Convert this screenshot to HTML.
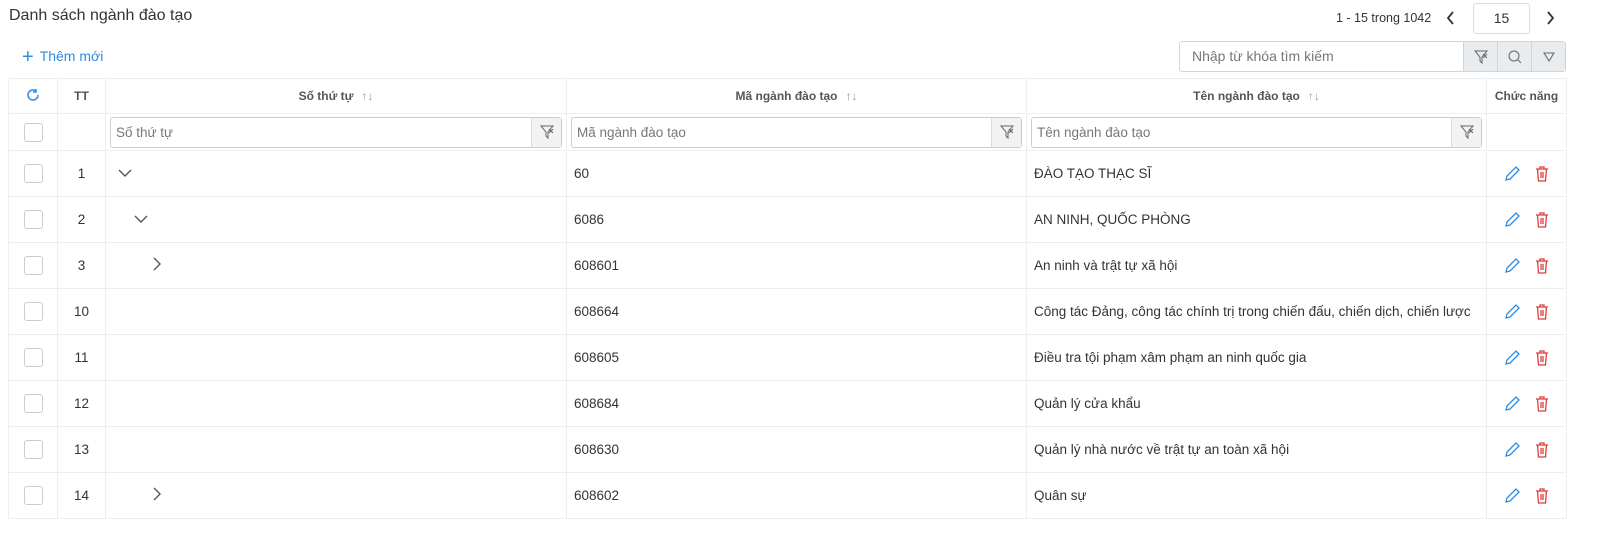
<!DOCTYPE html>
<html><head><meta charset="utf-8"><style>
*{box-sizing:border-box;margin:0;padding:0}
body{width:1616px;height:542px;background:#fff;font-family:"Liberation Sans",Arial,sans-serif;color:#333;position:relative;overflow:hidden}
.abs{position:absolute}
.title{left:9px;top:7px;font-size:16px;color:#333}
.pg{top:11px;left:1336px;font-size:12.5px;color:#333}
.pbox{left:1473px;top:3px;width:57px;height:31px;border:1px solid #ddd;border-radius:3px;text-align:center;line-height:29px;font-size:14px}
.add{left:22px;top:46px;font-size:14px;color:#2f8be6}
.search{left:1179px;top:41px;width:387px;height:31px;border:1px solid #d4d4d4;border-radius:3px;background:#fff;display:flex}
.search .in{flex:1;padding-left:12px;line-height:29px;font-size:14px;color:#777}
.search .b{width:34px;border-left:1px solid #d4d4d4;background:#e9ecef;display:flex;align-items:center;justify-content:center}
table{position:absolute;left:8px;top:78px;border-collapse:collapse;width:1558px;table-layout:fixed}
td,th{border:1px solid #eee;font-size:13.5px;white-space:nowrap;overflow:hidden}
th{height:35px;font-size:12px;color:#555;font-weight:bold}
.fr td{height:37px}
.dr td{height:46px}
.cb{width:19px;height:19px;border:1px solid #ccc;border-radius:3px;margin:auto}
.fi{margin:0 4px;height:31px;border:1px solid #ccc;border-radius:3px;display:flex}
.fi span{flex:1;padding-left:5px;line-height:29px;color:#777;font-size:13.5px}
.fi i{width:30px;border-left:1px solid #ddd;background:#f2f2f2;display:flex;align-items:center;justify-content:center}
.c{text-align:center}
.p{padding-left:7px}
.sort{color:#999;font-weight:normal;margin-left:8px;font-size:12px}
</style></head><body>
<div class="abs title">Danh sách ngành đào tạo</div>
<div class="abs pg">1 - 15 trong 1042</div>
<svg class="abs" style="left:1446px;top:11px" width="10" height="14"><path d="M7 1L2 7l5 6" fill="none" stroke="#333" stroke-width="1.8"/></svg>
<div class="abs pbox">15</div>
<svg class="abs" style="left:1545px;top:11px" width="10" height="14"><path d="M3 1l5 6-5 6" fill="none" stroke="#333" stroke-width="1.8"/></svg>
<div class="abs add"><span style="font-size:20px;vertical-align:-2px;margin-right:6px">+</span>Thêm mới</div>
<div class="abs search"><div class="in">Nhập từ khóa tìm kiếm</div>
<div class="b"><svg width="14" height="14"><path d="M1 1h12L8 7v6L6 11V7z M9 4l4 4M13 4l-4 4" fill="none" stroke="#666"/></svg></div>
<div class="b"><svg width="14" height="14"><circle cx="6" cy="6" r="5" fill="none" stroke="#666"/><path d="M10 10l3 3" stroke="#666"/></svg></div>
<div class="b"><svg width="12" height="10"><path d="M1 1h10L6 9z" fill="none" stroke="#666"/></svg></div></div>
<table>
<colgroup><col style="width:49px"><col style="width:48px"><col style="width:461px"><col style="width:460px"><col style="width:460px"><col style="width:80px"></colgroup>
<tr><th><svg width="14" height="14"><path d="M12 7a5 5 0 1 1-2-4M10 1v3h-3" fill="none" stroke="#2f8be6" stroke-width="1.5"/></svg></th><th>TT</th><th>Số thứ tự<span class="sort">↑↓</span></th><th>Mã ngành đào tạo<span class="sort">↑↓</span></th><th>Tên ngành đào tạo<span class="sort">↑↓</span></th><th>Chức năng</th></tr>
<tr class="fr"><td><div class="cb"></div></td><td></td>
<td><div class="fi"><span>Số thứ tự</span><i><svg width="14" height="14"><path d="M1 1h12L8 7v6L6 11V7z M9 4l4 4M13 4l-4 4" fill="none" stroke="#666"/></svg></i></div></td>
<td><div class="fi"><span>Mã ngành đào tạo</span><i><svg width="14" height="14"><path d="M1 1h12L8 7v6L6 11V7z M9 4l4 4M13 4l-4 4" fill="none" stroke="#666"/></svg></i></div></td>
<td><div class="fi"><span>Tên ngành đào tạo</span><i><svg width="14" height="14"><path d="M1 1h12L8 7v6L6 11V7z M9 4l4 4M13 4l-4 4" fill="none" stroke="#666"/></svg></i></div></td><td></td></tr>
<tbody id="b"></tbody>
</table>
<script>
var rows=[["1",0,"d","60","ĐÀO TẠO THẠC SĨ"],["2",1,"d","6086","AN NINH, QUỐC PHÒNG"],["3",2,"r","608601","An ninh và trật tự xã hội"],["10",0,"","608664","Công tác Đảng, công tác chính trị trong chiến đấu, chiến dịch, chiến lược"],["11",0,"","608605","Điều tra tội phạm xâm phạm an ninh quốc gia"],["12",0,"","608684","Quản lý cửa khẩu"],["13",0,"","608630","Quản lý nhà nước về trật tự an toàn xã hội"],["14",2,"r","608602","Quân sự"]];
var h="";rows.forEach(function(r){var ic="";if(r[2]=="d")ic='<svg style="margin-left:'+(12+r[1]*16)+'px" width="14" height="10"><path d="M1 2l6 6 6-6" fill="none" stroke="#555" stroke-width="1.4"/></svg>';if(r[2]=="r")ic='<svg style="margin-left:'+(14+r[1]*16)+'px" width="10" height="14"><path d="M2 1l6 6-6 6" fill="none" stroke="#555" stroke-width="1.4"/></svg>';
h+='<tr class="dr"><td><div class="cb"></div></td><td class="c">'+r[0]+'</td><td>'+ic+'</td><td class="p">'+r[3]+'</td><td class="p">'+r[4]+'</td><td class="c"><svg width="17" height="17" style="margin-right:14px;vertical-align:middle"><path d="M2 15l1-4 9-9 3 3-9 9z" fill="none" stroke="#2f8be6" stroke-width="1.3"/></svg><svg width="14" height="16" style="vertical-align:middle"><path d="M1 3h12M5 3V1h4v2M2.5 3l1 12h7l1-12M6 6v6M8 6v6" fill="none" stroke="#e03b3b" stroke-width="1.3"/></svg></td></tr>';});
document.getElementById("b").innerHTML=h;
</script>
</body></html>
